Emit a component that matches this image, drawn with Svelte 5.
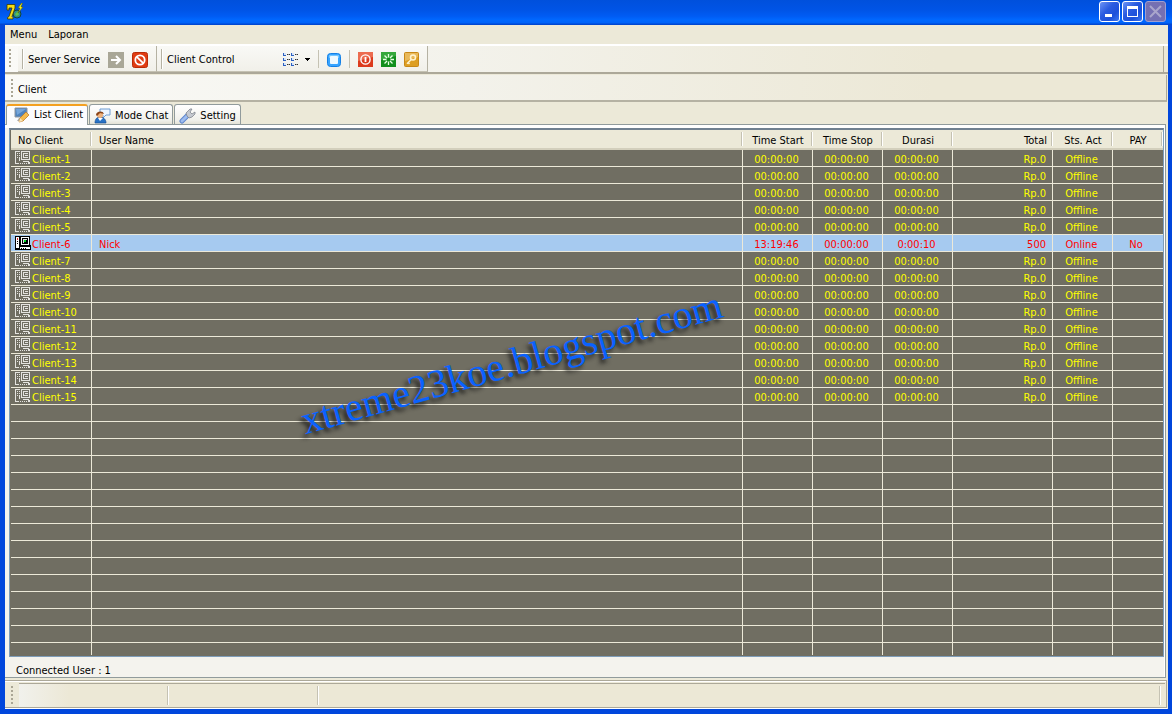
<script>
  const offline = { start: '00:00:00', stop: '00:00:00', durasi: '00:00:00', total: 'Rp.0', status: 'Offline' };

  let clients = $state(
    Array.from({ length: 15 }, (_, i) => ({ name: `Client-${i + 1}`, user: '', pay: '', ...offline }))
  );
  clients[5] = {
    name: 'Client-6', user: 'Nick', start: '13:19:46', stop: '00:00:00',
    durasi: '0:00:10', total: '500', status: 'Online', pay: 'No'
  };

  const emptyRows = Array.from({ length: 14 });
  let connected = $derived(clients.filter((c) => c.status === 'Online').length);
  let tab = $state('list');
</script>

{#snippet computer(online)}
  <svg width="16" height="14" viewBox="0 0 16 14" shape-rendering="crispEdges" aria-hidden="true">
    {#if online}
      <path fill="#000" d="M0 0h15v9h1v5H0z" />
      <path fill="#fff" d="M1 1h3v11H1zM6 1h8v8H6zM5 11h10v2H5z" />
      <path fill="#000" d="M7 2h6v6H7zM2 5h1v1H2zM2 7h1v1H2zM6 12h1v1H6zM8 12h1v1H8zM10 12h1v1h-1z" />
      <path fill="#d22" d="M2 2h1v2H2z" />
      <path fill="#ddd" d="M8 3h4v4H8z" />
      <path fill="#000" d="M9 4h3v3H9z" />
      <path fill="#0d2" d="M9 4h2v2H9z" />
    {:else}
      <path fill="#e4e3df" d="M0 0h5v1H1v11h3v1H0zM2 2h1v1H2zM2 4h1v1H2zM2 6h1v1H2zM4 2h1v1H4zM4 4h1v1H4zM4 6h1v4H4zM6 0h9v1H6zM6 1h1v8H6zM14 1h1v8h-1zM7 8h7v1H7zM8 2h5v1H8zM8 3h1v4H8zM9 6h4v1H9zM10 4h3v1h-3zM8 10h6v1H8zM5 12h1v1H5zM7 12h1v1H7zM9 12h1v1H9zM11 12h1v1h-1zM13 11h2v2h-2z" />
    {/if}
  </svg>
{/snippet}

<div class="window">
  <header class="titlebar">
    <svg width="18" height="18" viewBox="0 0 18 18" aria-hidden="true">
      <circle cx="11" cy="11" r="4" fill="#2c8b8b" stroke="#14443b" />
      <path d="M9 11l3-3 1 4-3 1z" fill="#62c04a" />
      <path d="M1 1.500h8V5L6 13.500l1 1V16H1.500v-1.500L3 13.500 6 5H3v2H1z" fill="#f6dc16" stroke="#3d3900" stroke-width=".8" />
      <path d="M15.500 0L12 5h2l-2 5 5-6h-2l1.500-4z" fill="#f5f019" stroke="#4c5200" stroke-width=".5" />
    </svg>
    <div class="caption-buttons">
      <button aria-label="Minimize"><svg width="15" height="15"><path d="M3 10h7v3H3z" fill="#fff" /></svg></button>
      <button aria-label="Maximize"><svg width="15" height="15"><path d="M2 2h11v11H2zM3 5v7h9V5z" fill="#fff" fill-rule="evenodd" /></svg></button>
      <button aria-label="Close" class="close" disabled><svg width="15" height="15"><path d="M2 2l11 11M13 2L2 13" stroke="#a9a5cb" stroke-width="2" /></svg></button>
    </div>
  </header>

  <nav class="menu">
    <button>Menu</button>
    <button>Laporan</button>
  </nav>

  <div class="toolbar">
    <span class="grip"></span>
    <div class="band">
      <span class="label server">Server Service</span>
      <button aria-label="Start service">
        <svg width="16" height="16" viewBox="0 0 16 16">
          <path d="M0 0h16v16H0z" fill="#a9a797" />
          <path d="M3 8h9M8 4l4 4-4 4" fill="none" stroke="#fff" stroke-width="2" />
        </svg>
      </button>
      <button aria-label="Stop service">
        <svg width="16" height="16" viewBox="0 0 16 16">
          <rect x=".5" y=".5" width="15" height="15" rx="2" fill="#e03c12" stroke="#b92c08" />
          <circle cx="8" cy="8" r="4.7" fill="none" stroke="#fff" stroke-width="1.8" />
          <path d="M4.8 4.8l6.4 6.4" stroke="#fff" stroke-width="1.8" />
        </svg>
      </button>
    </div>
    <div class="band">
      <span class="label control">Client Control</span>
      <button aria-label="View" class="view">
        <svg width="16" height="14" viewBox="0 0 16 14" shape-rendering="crispEdges">
          {#each [0, 5, 10] as y}
            {#each [0, 8] as x}
              <path d="M{x} {y}h3v3h-3z" fill="#2b5fc0" />
              <path d="M{x + 1} {y}h2v2h-2z" fill="#d5e4fa" />
              <path d="M{x + 4} {y + 1}h1v1h-1zM{x + 6} {y + 1}h1v1h-1z" fill="#333" />
              <path d="M{x + 5} {y + 1}h1v1h-1z" fill="#999" />
            {/each}
          {/each}
        </svg>
        <svg width="5" height="3" viewBox="0 0 5 3" shape-rendering="crispEdges"><path d="M0 0h5v1H4v1H3v1H2V2H1V1H0z" /></svg>
      </button>
      <span class="divider"></span>
      <button aria-label="Client screen">
        <svg width="14" height="14" viewBox="0 0 14 14">
          <rect x=".5" y=".5" width="13" height="13" rx="3" fill="#37a4ff" stroke="#1580e6" />
          <path d="M2 2h10v3H2z" fill="#74c6ff" />
          <rect x="3" y="3" width="8" height="8" rx="1" fill="#eff9ff" />
        </svg>
      </button>
      <span class="divider"></span>
      <div class="actions">
        <button aria-label="Shut down">
          <svg width="15" height="15" viewBox="0 0 15 15">
            <path d="M0 0h15v15H0z" fill="#dc3b1d" /><path d="M0 0h15v5L0 9z" fill="#ec6c50" />
            <circle cx="7.5" cy="7.5" r="4.6" fill="none" stroke="#fff" stroke-width="1.4" />
            <path d="M7.5 5v5" stroke="#fff" stroke-width="1.8" />
          </svg>
        </button>
        <button aria-label="Restart">
          <svg width="15" height="15" viewBox="0 0 15 15">
            <path d="M0 0h15v15H0z" fill="#128f1c" /><path d="M0 0h15v4L0 8z" fill="#36a83c" />
            <path d="M7.5 2v3.5M7.5 9.5V13M2 7.5h3.5M9.5 7.5H13M3.5 3.5L6 6M9 9l2.5 2.5M11.5 3.5L9 6M6 9l-2.5 2.5" stroke="#e8ffe4" stroke-width="1.3" />
          </svg>
        </button>
        <button aria-label="Unlock">
          <svg width="15" height="15" viewBox="0 0 15 15">
            <rect x=".5" y=".5" width="14" height="14" rx="1" fill="#dd9e22" stroke="#c88816" />
            <path d="M1 1h13v4L1 9z" fill="#e9b95a" />
            <circle cx="9" cy="5.5" r="2.5" fill="none" stroke="#fff3cf" stroke-width="1.5" />
            <path d="M7.3 7.5L3 11.7M4 10.5l1.5 1.5" fill="none" stroke="#fff3cf" stroke-width="1.5" />
          </svg>
        </button>
      </div>
    </div>
    <span class="toolbar-end"></span>
  </div>

  <div class="clientbar">
    <span class="grip"></span>
    <span class="label">Client</span>
  </div>

  <div class="tabs" role="tablist">
    <button role="tab" aria-selected={tab === 'list'} class:active={tab === 'list'} onclick={() => (tab = 'list')}>
      <svg width="16" height="16" viewBox="0 0 16 16">
        <path d="M1 1h12v9H1z" fill="#4e82bd" stroke="#92989f" />
        <path d="M2 2h10L3 8z" fill="#76a5d9" />
        <path d="M5 11h4l1 3H3z" fill="#aaa" />
        <path d="M5 15l1-4 6-6 3 3-6 6z" fill="#f6ba4b" stroke="#bc7620" stroke-width=".7" />
        <path d="M5 15l1-4 3 3z" fill="#f7e2b8" />
      </svg>
      List Client
    </button>
    <button role="tab" aria-selected={tab === 'chat'} class:active={tab === 'chat'} onclick={() => (tab = 'chat')}>
      <svg width="17" height="16" viewBox="0 0 17 16">
        <path d="M6 1h10v6h-4l-3 3V7H6z" fill="#edf5ff" stroke="#6c9cd2" />
        <path d="M1 15c0-4 2-6 5-6s6 2 6 6z" fill="#2872c6" stroke="#174d93" stroke-width=".7" />
        <path d="M4 10l2 3 3-3z" fill="#fff" />
        <circle cx="6" cy="7" r="3" fill="#f0b17b" />
        <path d="M2 7c0-4 7-5 8-1L6 5 3 8z" fill="#8b4518" />
      </svg>
      Mode Chat
    </button>
    <button role="tab" aria-selected={tab === 'setting'} class:active={tab === 'setting'} onclick={() => (tab = 'setting')}>
      <svg width="17" height="16" viewBox="0 0 17 16">
        <path d="M3 13l6-6" stroke="#5d85cc" stroke-width="5" stroke-linecap="round" />
        <path d="M3 13l6-6" stroke="#9dbcf0" stroke-width="3" stroke-linecap="round" />
        <path d="M8 8L7 5l4-4h2l-2 3 2 2 3-2v2l-3 3-3 1z" fill="#c5c9d0" stroke="#81868f" stroke-width=".8" />
      </svg>
      Setting
    </button>
  </div>

  <main class="panel">
    <div class="grid">
      <table>
        <colgroup>
          <col class="c-no" /><col /><col class="c-time" /><col class="c-time" /><col class="c-time" />
          <col class="c-total" /><col class="c-status" /><col class="c-pay" />
        </colgroup>
        <thead>
          <tr>
            <th class="left">No Client</th>
            <th class="left">User Name</th>
            <th>Time Start</th>
            <th>Time Stop</th>
            <th>Durasi</th>
            <th class="right">Total</th>
            <th>Sts. Act</th>
            <th>PAY</th>
          </tr>
        </thead>
        <tbody>
          {#each clients as client}
            <tr class:online={client.status === 'Online'}>
              <td class="name"><div>{@render computer(client.status === 'Online')}<span>{client.name}</span></div></td>
              <td class="left">{client.user}</td>
              <td>{client.start}</td>
              <td>{client.stop}</td>
              <td>{client.durasi}</td>
              <td class="right">{client.total}</td>
              <td>{client.status}</td>
              <td>{client.pay}</td>
            </tr>
          {/each}
          {#each emptyRows as _}
            <tr><td></td><td></td><td></td><td></td><td></td><td></td><td></td><td></td></tr>
          {/each}
          <tr class="last"><td></td><td></td><td></td><td></td><td></td><td></td><td></td><td></td></tr>
        </tbody>
      </table>
      <div class="watermark">xtreme23koe.blogspot.com</div>
    </div>
    <div class="connected">Connected User : {connected}</div>
  </main>

  <footer class="statusbar">
    <span class="grip"></span>
    <div class="cells">
      <span></span>
      <span></span>
      <span class="rest"></span>
    </div>
  </footer>
</div>

<style>
  :global(body) {
    background: #ece9d8;
  }
  .window {
    box-sizing: border-box;
    min-height: 100vh;
    display: flex;
    flex-direction: column;
    border: solid #0046dc;
    border-width: 0 4px 5px 5px;
    background: #ece9d8;
    color: #000;
    font: 11px/14px Tahoma, "DejaVu Sans Condensed", "Noto Sans", sans-serif;
  }
  button {
    display: flex;
    align-items: center;
    padding: 0;
    border: 0;
    background: none;
    color: inherit;
    font: inherit;
  }
  svg {
    display: block;
    flex: none;
  }
  .titlebar {
    display: flex;
    justify-content: space-between;
    height: 25px;
    margin: 0 -4px 0 -5px;
    padding: 0 6px;
    box-sizing: border-box;
    background: linear-gradient(#0050dc, #0054e6 40%, #005cf4 65%, #0068ff 80%, #0064fa 90%, #0040c8);
  }
  .titlebar > svg {
    margin-top: 3px;
  }
  .caption-buttons {
    display: flex;
    gap: 2px;
    padding-top: 1px;
  }
  .caption-buttons button {
    justify-content: center;
    box-sizing: border-box;
    width: 21px;
    height: 21px;
    border: 1px solid #fff;
    border-radius: 3px;
    background: linear-gradient(135deg, #6d94f5, #2a5be0 40%, #1c50da 70%, #3c78f2);
  }
  .caption-buttons .close {
    border-color: #9e9fd0;
    background: #7570b2;
  }
  .menu {
    display: flex;
    gap: 11px;
    height: 19px;
    padding-left: 5px;
    border-bottom: 2px solid #fff;
  }
  .grip {
    width: 2px;
    background: repeating-linear-gradient(#aaa695 0 2px, transparent 2px 4px);
  }
  .toolbar {
    display: flex;
    height: 26px;
    padding-left: 4px;
    border-bottom: 2px solid #aca899;
    background: linear-gradient(90deg, #fafaf7, #f3f2eb 40%, #ece8d6 80%);
  }
  .toolbar .grip {
    margin: 3px 7px 3px 0;
  }
  .toolbar-end {
    width: 1px;
    margin: 0 4px 0 auto;
    background: #aca899;
  }
  .band {
    display: flex;
    align-items: center;
    padding: 2px 8px 0 0;
    border-right: 1px solid #b5b2a3;
    border-bottom: 1px solid #c5c2b3;
    background: linear-gradient(#f9f9f6, #f1f0e9);
  }
  .band::before {
    content: "";
    align-self: stretch;
    width: 1px;
    margin: 1px 4px 2px;
    border-right: 1px solid #fff;
    background: #b5b2a3;
  }
  .band button + button {
    margin-left: 8px;
  }
  .server {
    width: 80px;
  }
  .control {
    width: 116px;
  }
  .label {
    white-space: nowrap;
  }
  .view {
    gap: 6px;
  }
  .divider {
    align-self: stretch;
    width: 1px;
    margin: 2px 8px 3px;
    background: #c5c2b3;
  }
  .actions {
    display: flex;
  }
  .clientbar {
    display: flex;
    align-items: center;
    gap: 5px;
    height: 25px;
    margin: 1px 1px 0 0;
    padding-left: 6px;
    border-right: 1px solid #aca899;
    border-bottom: 2px solid #b5b2a3;
    background: linear-gradient(90deg, #fafaf7, #f3f2eb 40%, #ece8d6 80%);
  }
  .clientbar .grip {
    height: 18px;
  }
  .clientbar .label {
    padding-top: 4px;
  }
  .tabs {
    display: flex;
    align-items: flex-end;
    gap: 1px;
    height: 22px;
    padding-left: 1px;
  }
  .tabs button {
    box-sizing: border-box;
    gap: 4px;
    height: 20px;
    padding: 2px 4px 0;
    border: 1px solid #919b9c;
    border-bottom: 0;
    border-radius: 3px 3px 0 0;
    background: linear-gradient(#fff, #f0f0ea 80%, #e4e2d6);
    white-space: nowrap;
  }
  .tabs .active {
    height: 21px;
    padding: 0 4px 2px 7px;
    border-top: 2px solid #f3a022;
    background: #fcfcfe;
    position: relative;
    z-index: 1;
    margin-bottom: -1px;
  }
  .panel {
    flex: 1;
    display: flex;
    flex-direction: column;
    margin-right: 2px;
    padding: 3px 1px 0 4px;
    border: 1px solid #919b9c;
    border-left: 0;
    background: #f4f3ee;
    box-shadow: inset 0 3px #fff, inset -1px 0 #fff;
  }
  .grid {
    position: relative;
    flex: 1;
    border: 1px solid #7f9db9;
    border-top: 2px solid #708090;
    background: #706e62;
  }
  table {
    width: 100%;
    table-layout: fixed;
    border-collapse: separate;
    border-spacing: 0;
    padding-left: 1px;
  }
  .c-no {
    width: 81px;
  }
  .c-time {
    width: 70px;
  }
  .c-total {
    width: 100px;
  }
  .c-status {
    width: 60px;
  }
  .c-pay {
    width: 50px;
  }
  th {
    height: 15px;
    padding: 3px 0 0;
    border-bottom: 2px solid #d3cfbc;
    background: linear-gradient(#c5c2b3, #c5c2b3) right 1px center / 1px 14px no-repeat,
      linear-gradient(#fff, #fff) right center / 1px 14px no-repeat, #ece9d8;
    font-weight: 400;
  }
  td {
    height: 13px;
    padding: 3px 2px 0 0;
    border-right: 1px solid #ece9d8;
    border-bottom: 1px solid #ece9d8;
    color: #ff0;
    line-height: 13px;
    text-align: center;
    white-space: nowrap;
  }
  td:last-child {
    border-right: 0;
    padding-right: 4px;
  }
  .left {
    padding-left: 7px;
    text-align: left;
  }
  .right {
    padding-right: 6px;
    text-align: right;
  }
  .name {
    padding-top: 0;
  }
  .name div {
    display: flex;
    align-items: center;
    gap: 1px;
    padding-left: 4px;
  }
  .name span {
    padding-top: 3px;
  }
  .online td {
    background: #a6caf0;
    color: #f00;
  }
  .last td {
    height: 9px;
    border-bottom: 0;
  }
  .watermark {
    position: absolute;
    left: 298px;
    top: 269px;
    transform: rotate(-15.7deg);
    transform-origin: left bottom;
    color: #0a62ff;
    font: 40px/44px "Liberation Serif", serif;
    text-shadow: -4px 3px 4px rgba(20, 20, 20, 0.9);
    white-space: nowrap;
    pointer-events: none;
  }
  .connected {
    padding: 7px 7px 0;
    height: 13px;
  }
  .statusbar {
    display: flex;
    gap: 6px;
    height: 24px;
    margin: 2px 1px 1px 0;
    padding: 2px 1px 0 6px;
    border: 1px solid #aca899;
    border-left: 0;
    box-shadow: inset 0 1px #fff, 0 1px #fff;
  }
  .statusbar .grip {
    margin: 3px 0;
  }
  .cells {
    flex: 1;
    display: flex;
    border-top: 1px solid #aca899;
    background: linear-gradient(90deg, #f1f1ec, #ece8d6 50px);
  }
  .cells span {
    box-sizing: border-box;
    width: 150px;
    margin: 2px 0;
    border-right: 1px solid #fff;
    box-shadow: inset -1px 0 #c5c2b3;
  }
  .cells .rest {
    flex: 1;
    margin-right: 4px;
  }
</style>
